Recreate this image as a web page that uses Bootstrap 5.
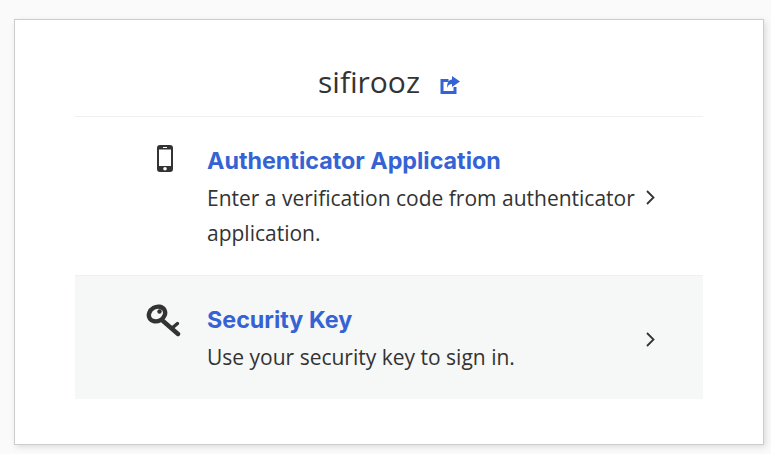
<!DOCTYPE html>
<html lang="en">
<head>
<meta charset="utf-8">
<title>Sign in</title>
<link rel="stylesheet" href="https://cdn.jsdelivr.net/npm/bootstrap@5.3.0/dist/css/bootstrap.min.css">
<style>
html,body{height:100%;}
body{background:#fafafa;font-family:"Open Sans",sans-serif;color:#333;overflow:hidden;}
.shell{padding:19px 7px 0 14px;}
.panel{background:#fff;border:1px solid #ccc;box-shadow:2px 2px 6px rgba(0,0,0,.12);height:426px;padding:31px 60px 0;}
.who{height:66px;border-bottom:1px solid #f0f0f0;padding-bottom:4px;gap:20px;}
.who-name{font-size:30px;line-height:1;color:#333;}
.who-link{color:#3563d4;line-height:0;margin-top:6px;}
.opt{color:#333;text-decoration:none;}
.opt-a{height:159px;border-bottom:1px solid #f0f0f0;padding-top:28px;}
.opt-b{height:123px;background:#f6f7f7;padding-top:28px;}
.ico{width:132px;flex:none;line-height:0;}
.opt-a .ico{padding-left:82px;}
.opt-b .ico{padding-left:71px;}
.opt-title{font-family:"Inter",sans-serif;font-weight:700;font-size:23.3px;line-height:32px;color:#3563d4;}
.opt-text{font-size:21px;line-height:35px;margin:4px 0 0;color:#333;width:430px;}
.chev{flex:none;line-height:0;margin-left:9px;}
.chev-a{margin-top:45px;}
.chev-b{margin-top:28px;}
</style>
</head>
<body>
<div class="shell">
<main class="panel">
<div class="who d-flex justify-content-center align-items-center">
<span class="who-name">sifirooz</span>
<a class="who-link" href="#" aria-label="Share">
<svg width="20" height="18" viewBox="0 0 20 18"><path fill="currentColor" d="M0.500 3h8v3H3.500v9h10v-4H16.500V18H0.500zM12 0L20 5.500L12 11V8C9.500 8 8 9 7 12C7 7 8.500 4 12 3.500z"/></svg>
</a>
</div>
<a class="opt opt-a d-flex" href="#">
<div class="ico"><svg width="16" height="27" viewBox="0 0 16 27"><path fill="#333" fill-rule="evenodd" d="M3 0h10a3 3 0 0 1 3 3v21a3 3 0 0 1-3 3H3a3 3 0 0 1-3-3V3a3 3 0 0 1 3-3zM2 4.500V21h12V4.500zM6 2v1h4V2zM8 22a1.800 1.800 0 1 0 0 3.600a1.800 1.800 0 0 0 0-3.600z"/></svg></div>
<div><div class="opt-title">Authenticator Application</div><p class="opt-text">Enter a verification code from authenticator application.</p></div>
<div class="chev chev-a"><svg width="9" height="15" viewBox="0 0 9 15"><path fill="none" stroke="#333" stroke-width="1.800" d="M1 1l6.500 6.500L1 14"/></svg></div>
</a>
<a class="opt opt-b d-flex" href="#">
<div class="ico"><svg width="36" height="33" viewBox="0 0 36 33"><g fill="none" stroke="#333" stroke-width="4.400"><ellipse cx="11" cy="10" rx="8.500" ry="7" transform="rotate(-30 11 10)"/><path stroke-linecap="round" d="M17 17L32 30"/><path stroke-width="3.400" stroke-linecap="round" d="M25.500 24.500l6-5"/></g><circle cx="13.500" cy="7.500" r="2.200" fill="#333"/></svg></div>
<div><div class="opt-title">Security Key</div><p class="opt-text">Use your security key to sign in.</p></div>
<div class="chev chev-b"><svg width="9" height="15" viewBox="0 0 9 15"><path fill="none" stroke="#333" stroke-width="1.800" d="M1 1l6.500 6.500L1 14"/></svg></div>
</a>
</main>
</div>
</body>
</html>
